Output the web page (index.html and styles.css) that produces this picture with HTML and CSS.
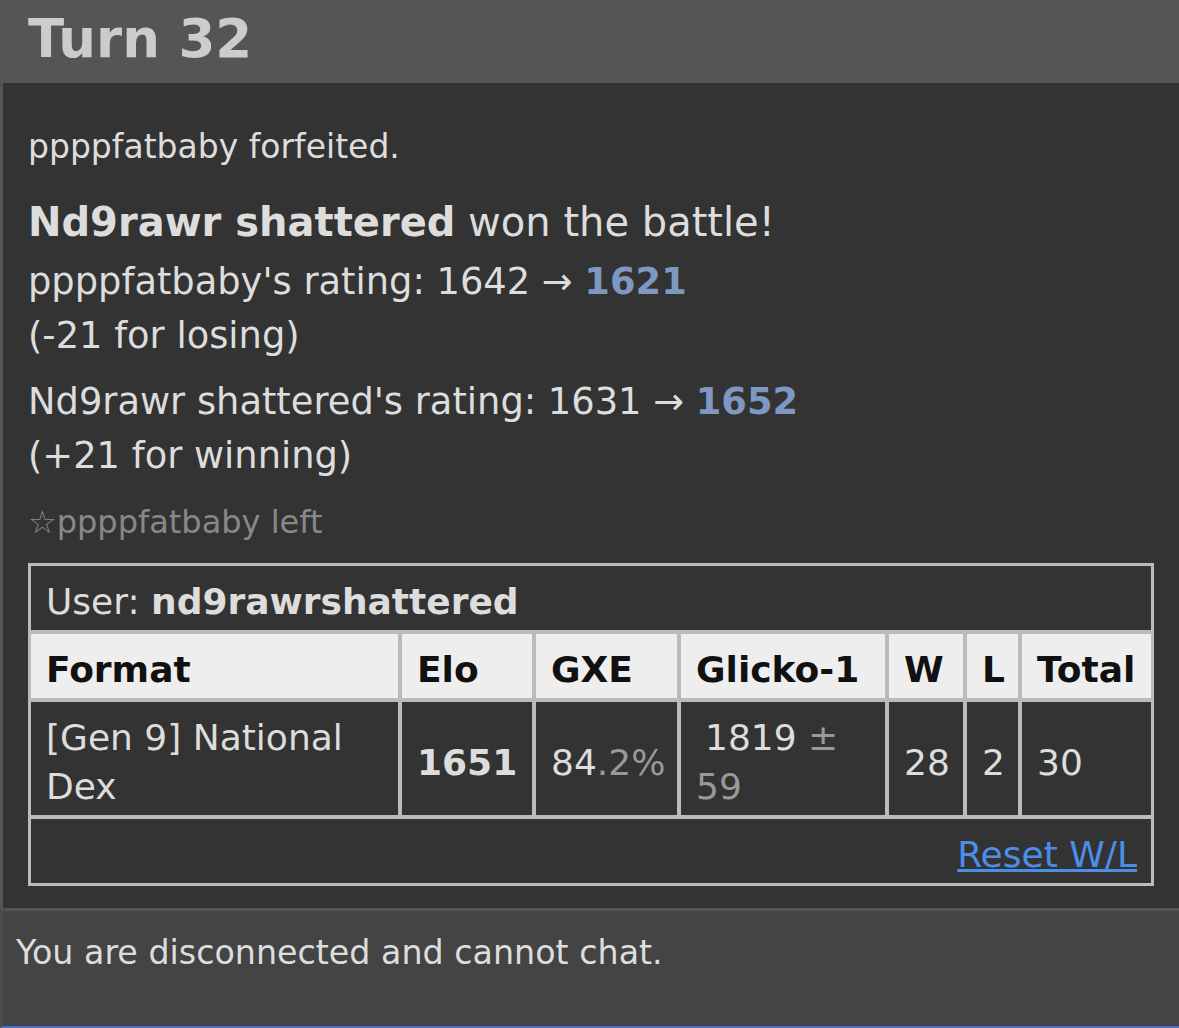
FILE: index.html
```html
<!DOCTYPE html>
<html>
<head>
    <title>Turn 32</title>
    <link rel="stylesheet" href="styles.css">
</head>
<body>
    <div class="room">
        <h2 class="turn">Turn 32</h2>

        <div class="log">
            <p class="forfeit">ppppfatbaby forfeited.</p>

            <p class="winner"><strong>Nd9rawr shattered</strong> won the battle!</p>

            <p class="rating">ppppfatbaby's rating: 1642 &rarr; <strong class="new-rating">1621</strong><br>(-21 for losing)</p>
            <p class="rating second">Nd9rawr shattered's rating: 1631 &rarr; <strong class="new-rating">1652</strong><br>(+21 for winning)</p>

            <p class="left-msg">&#9734;ppppfatbaby left</p>

            <table class="ladder">
                <colgroup>
                    <col class="col-format">
                    <col class="col-elo">
                    <col class="col-gxe">
                    <col class="col-glicko">
                    <col class="col-w">
                    <col class="col-l">
                    <col class="col-total">
                </colgroup>
                <tr>
                    <td colspan="7" class="user-cell">User: <strong>nd9rawrshattered</strong></td>
                </tr>
                <tr class="head">
                    <th>Format</th>
                    <th>Elo</th>
                    <th>GXE</th>
                    <th>Glicko-1</th>
                    <th>W</th>
                    <th>L</th>
                    <th>Total</th>
                </tr>
                <tr class="data">
                    <td>[Gen 9] National Dex</td>
                    <td><strong>1651</strong></td>
                    <td>84<span class="dim">.2%</span></td>
                    <td class="glicko">1819 <span class="dim">&plusmn; 59</span></td>
                    <td>28</td>
                    <td>2</td>
                    <td>30</td>
                </tr>
                <tr>
                    <td colspan="7" class="reset-cell"><a href="#" class="reset-link">Reset W/L</a></td>
                </tr>
            </table>
        </div>

        <div class="chat-bar">
            <p>You are disconnected and cannot chat.</p>
        </div>
    </div>
</body>
</html>
```

FILE: styles.css
```css
* {
    font-family: 'DejaVu Sans', Verdana, sans-serif;
    box-sizing: border-box;
}

body {
    margin: 0;
    background-color: #333333;
    color: #dddddd;
}

.room {
    height: 1028px;
    display: flex;
    flex-direction: column;
}

/* Cabecera del turno */
.turn {
    margin: 0;
    height: 83px;
    padding: 0 0 3px 28px;
    background-color: #555555;
    color: #cccccc;
    font-size: 53px;
    font-weight: bold;
    line-height: 78px;
}

.log {
    border-left: 3px solid #555555;
    padding: 44px 25px 22px 25px;
}

.log p {
    margin: 0;
}

.forfeit {
    font-size: 33px;
    line-height: 40px;
}

.winner {
    font-size: 40px;
    line-height: 48px;
    margin-top: 31px !important;
}

.rating {
    font-size: 36.8px;
    line-height: 54px;
    margin-top: 9px !important;
}

.rating.second {
    margin-top: 12px !important;
}

.new-rating {
    color: #7e98c2;
}

.left-msg {
    font-size: 32px;
    line-height: 40px;
    color: #888888;
    margin-top: 19px !important;
}

/* Tabla del ladder */
.ladder {
    margin-top: 21px;
    width: 1126px;
    table-layout: fixed;
    border-collapse: separate;
    border-spacing: 0;
    border: 1px solid #bbbbbb;
    font-size: 36px;
}

.ladder td,
.ladder th {
    border: 2px solid #bbbbbb;
    padding: 11px 15px 4px 15px;
    line-height: 49px;
    text-align: left;
    vertical-align: middle;
    overflow: visible;
}

.col-format { width: 371px; }
.col-elo { width: 134px; }
.col-gxe { width: 145px; }
.col-glicko { width: 208px; }
.col-w { width: 78px; }
.col-l { width: 55px; }
.col-total { width: 133px; }

.user-cell {
    height: 68px;
}

.head th {
    background-color: #eeeeee;
    color: #111111;
    font-weight: bold;
}

.glicko {
    text-indent: 9px;
}

.dim {
    color: #999999;
}

.reset-cell {
    text-align: right !important;
    height: 66px;
    padding-right: 14px !important;
}

.reset-link {
    color: #4a8ee8;
}

/* Barra inferior del chat */
.chat-bar {
    flex: 1;
    background-color: #444444;
    border-top: 3px solid #555555;
    border-left: 3px solid #4d4d4d;
    border-bottom: 2px solid #4c6fcf;
    padding: 20px 13px;
}

.chat-bar p {
    margin: 0;
    font-size: 33.3px;
    line-height: 44px;
}
```
